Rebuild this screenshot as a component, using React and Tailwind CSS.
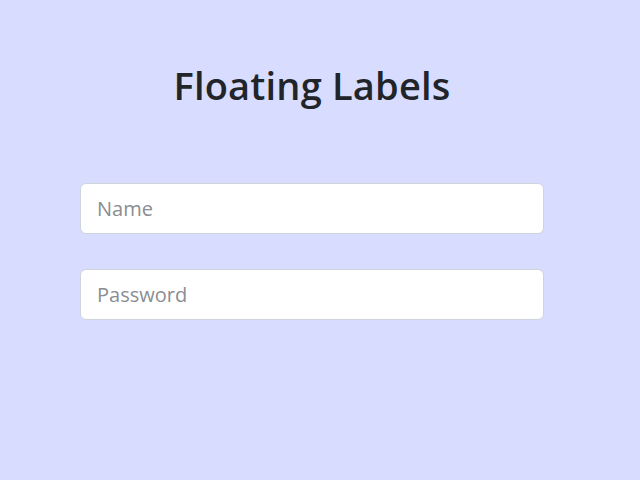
export default function App() {
  return (
    <div
      className="min-h-screen bg-[#d8dcfe] pt-[56px] pl-[80px]"
      style={{ fontFamily: '"Open Sans", "Noto Sans", sans-serif' }}
    >
      <div className="w-[464px]">
        <h1 className="text-center text-[38px] font-semibold text-[#212529] leading-[58px] tracking-[0.2px]">
          Floating Labels
        </h1>
        <form className="mt-[69px] flex flex-col gap-[35px]">
          <input
            type="text"
            placeholder="Name"
            className="h-[51px] w-full rounded-[6px] border border-[#ced4da] bg-white px-4 text-[20px] text-[#212529] placeholder:text-[#8a8d91] outline-none"
          />
          <input
            type="password"
            placeholder="Password"
            className="h-[51px] w-full rounded-[6px] border border-[#ced4da] bg-white px-4 text-[20px] text-[#212529] placeholder:text-[#8a8d91] outline-none"
          />
        </form>
      </div>
    </div>
  );
}
